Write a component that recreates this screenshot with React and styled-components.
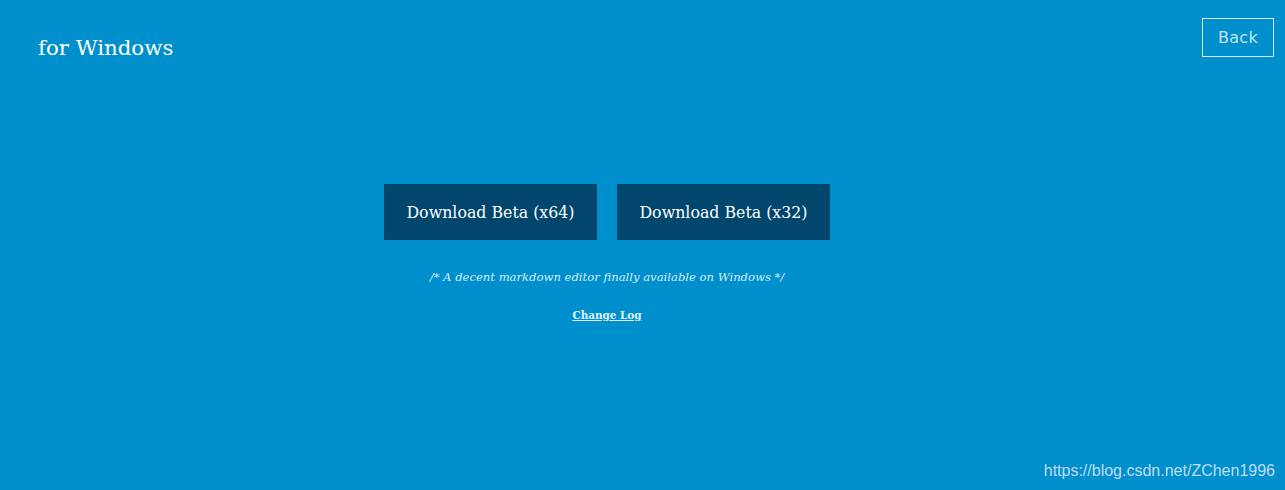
import React from "react";
import styled, { createGlobalStyle } from "styled-components";

const GlobalStyle = createGlobalStyle`
  html, body {
    margin: 0;
    padding: 0;
    background: #008fcd;
  }
`;

const Page = styled.div`
  position: relative;
  width: 100%;
  height: 490px;
  background: #008fcd;
  overflow: hidden;
`;

const Header = styled.header`
  display: flex;
  justify-content: space-between;
  align-items: flex-start;
  padding: 18px 11px 0 38px;
`;

const Title = styled.h1`
  margin: 18px 0 0;
  font-family: "DejaVu Serif", Georgia, serif;
  font-weight: normal;
  font-size: 21.3px;
  line-height: 24px;
  color: #ffffff;
`;

const BackButton = styled.a`
  box-sizing: border-box;
  display: flex;
  align-items: center;
  justify-content: center;
  width: 72px;
  height: 39px;
  border: 1px solid #d6ecf7;
  color: #c4e3f3;
  font-family: "DejaVu Sans", "Liberation Sans", sans-serif;
  font-size: 16px;
  letter-spacing: 0.3px;
  text-decoration: none;
  cursor: pointer;
`;

const Main = styled.main`
  width: 1214px;
  display: flex;
  flex-direction: column;
  align-items: center;
  margin-top: 124px;
`;

const ButtonRow = styled.div`
  display: flex;
  gap: 20px;
`;

const DownloadButton = styled.a`
  display: flex;
  align-items: center;
  justify-content: center;
  width: 213px;
  height: 56px;
  background: #00466d;
  color: #ffffff;
  font-family: "DejaVu Serif", Georgia, serif;
  font-size: 15.8px;
  text-decoration: none;
  cursor: pointer;
`;

const Tagline = styled.p`
  margin: 29px 0 0;
  font-family: "DejaVu Serif", Georgia, serif;
  font-style: italic;
  font-size: 11.6px;
  line-height: 16px;
  color: #d3ebf7;
`;

const ChangeLog = styled.a`
  margin-top: 22px;
  font-family: "DejaVu Serif", Georgia, serif;
  font-weight: bold;
  font-size: 10.4px;
  line-height: 16px;
  color: #e2f2fa;
  text-decoration: underline;
  cursor: pointer;
`;

const Watermark = styled.span`
  position: absolute;
  right: 10px;
  bottom: 10px;
  font-family: "Liberation Sans", Arial, sans-serif;
  font-size: 16px;
  color: #bfdcee;
`;

export default function App() {
  return (
    <Page>
      <GlobalStyle />
      <Header>
        <Title>for Windows</Title>
        <BackButton>Back</BackButton>
      </Header>
      <Main>
        <ButtonRow>
          <DownloadButton>Download Beta (x64)</DownloadButton>
          <DownloadButton>Download Beta (x32)</DownloadButton>
        </ButtonRow>
        <Tagline>/* A decent markdown editor finally available on Windows */</Tagline>
        <ChangeLog>Change Log</ChangeLog>
      </Main>
      <Watermark>https://blog.csdn.net/ZChen1996</Watermark>
    </Page>
  );
}
